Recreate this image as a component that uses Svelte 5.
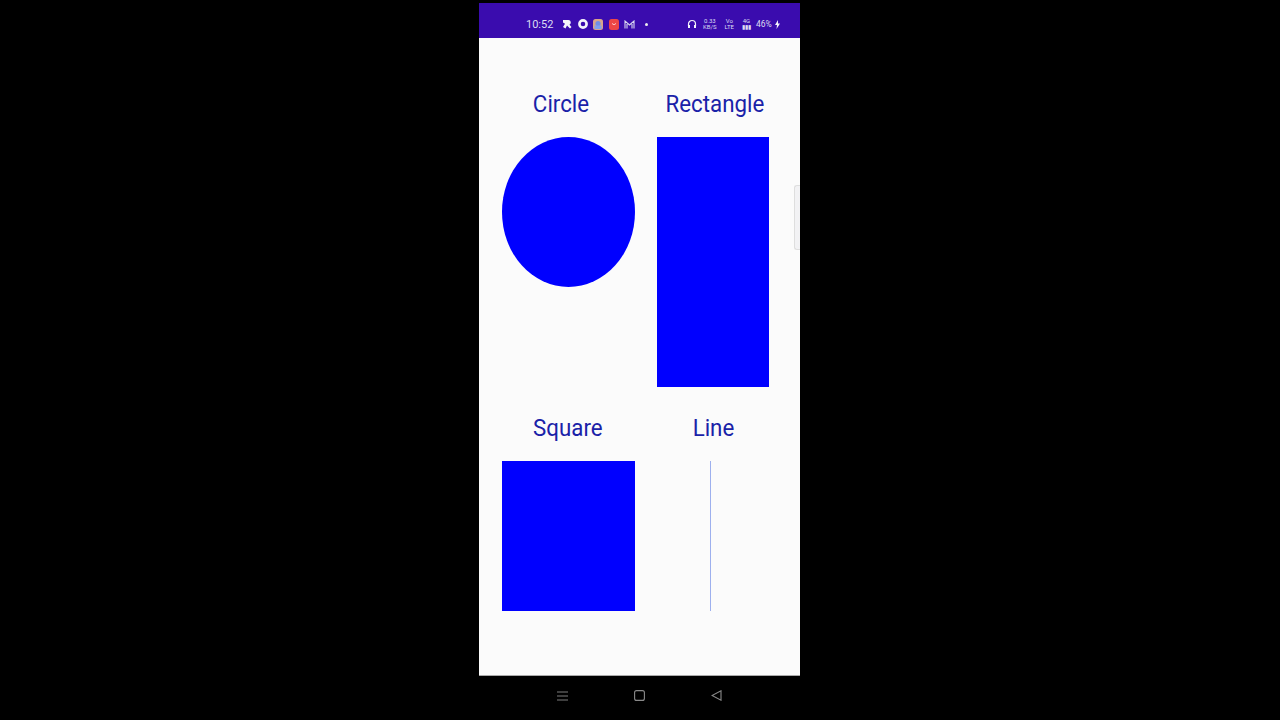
<script>
  const cells = [
    { name: 'Circle', kind: 'circle' },
    { name: 'Rectangle', kind: 'rect' },
    { name: 'Square', kind: 'square' },
    { name: 'Line', kind: 'line' }
  ];
</script>

<div class="page">
  <div class="phone">
    <header class="status">
      <span class="time">10:52</span>
      <div class="notif">
        <svg width="10" height="10" viewBox="0 0 10 10"><path d="M1 1h5.500a2.500 2.500 0 0 1 1 4.700L9.500 8 8 9.500 5 6.500 3.500 9.500 1 8l2-3.200L1 3.500z" fill="#f4f4fa"/></svg>
        <svg width="10" height="10" viewBox="0 0 10 10"><circle cx="5" cy="5" r="3.600" fill="none" stroke="#f4f4fa" stroke-width="2.600"/></svg>
        <svg width="10" height="11" viewBox="0 0 10 11"><rect width="10" height="11" rx="2.500" fill="#d8a48c"/><circle cx="5" cy="4.500" r="2.600" fill="#6f8ee8"/><rect x="1.500" y="6.500" width="7" height="3.500" fill="#7fa0f0"/></svg>
        <svg width="10" height="11" viewBox="0 0 10 11"><rect width="10" height="11" rx="2.500" fill="#ee4646"/><path d="M3 4.500q2 2.500 4 0" fill="none" stroke="#ffc8c8"/></svg>
        <svg width="11" height="9" viewBox="0 0 11 9"><path d="M1 8.500V1l4.500 4L10 1v7.500M3 8.500V4M8 8.500V4" fill="none" stroke="#d8d8f0" stroke-width="1.100"/></svg>
        <i class="dot"></i>
      </div>
      <div class="sys">
        <svg width="10" height="10" viewBox="0 0 10 10"><path d="M1.500 7V5a3.500 3.500 0 0 1 7 0v2" fill="none" stroke="#f4f4fa" stroke-width="1.200"/><rect x="1" y="6" width="2" height="3" fill="#f4f4fa"/><rect x="7" y="6" width="2" height="3" fill="#f4f4fa"/></svg>
        <span class="stack speed"><b>0.33</b><b>KB/S</b></span>
        <span class="stack volte"><b>Vo</b><b>LTE</b></span>
        <span class="stack signal"><b>4G</b><b>▮▮▮</b></span>
        <span class="batt">46%</span>
        <svg width="5" height="9" viewBox="0 0 5 9"><path d="M3 0 0 5h2L1.500 9 5 3.500H3z" fill="#f4f4fa"/></svg>
      </div>
    </header>

    <main class="screen">
      <div class="grid">
        {#each cells as c}
          <section class="cell">
            <h2 class="label {c.kind}-label">{c.name}</h2>
            <div class="shape {c.kind}"></div>
          </section>
        {/each}
      </div>
      <div class="scroll-handle"></div>
    </main>

    <nav class="navbar">
      <svg width="11" height="10" viewBox="0 0 11 10"><path d="M0 1h11M0 5h11M0 9h11" stroke="#7c7c7c" stroke-width="1.200"/></svg>
      <svg width="11" height="11" viewBox="0 0 11 11"><rect x=".6" y=".6" width="9.800" height="9.800" rx="2" fill="none" stroke="#8a8a8a" stroke-width="1.100"/></svg>
      <svg width="11" height="11" viewBox="0 0 11 11"><path d="M10 .8V10.200L1 5.500z" fill="none" stroke="#8a8a8a" stroke-width="1.100"/></svg>
    </nav>
  </div>
</div>

<style>
  :global(body) {
    margin: 0;
    background: #000;
  }
  .page {
    width: 1280px;
    height: 720px;
    background: #000;
    padding: 3px 0 0 479px;
    box-sizing: border-box;
    overflow: hidden;
    font-family: Roboto, "Liberation Sans", sans-serif;
  }
  .phone {
    width: 321px;
    height: 717px;
    display: flex;
    flex-direction: column;
  }
  .status {
    height: 35px;
    flex: none;
    background: #3a0cae;
    color: #dcdcf2;
    display: flex;
    align-items: center;
    padding: 7px 0 0 47px;
    box-sizing: border-box;
  }
  .time {
    font-size: 11px;
    width: 36px;
    white-space: nowrap;
  }
  .notif {
    display: flex;
    align-items: center;
    gap: 5.500px;
  }
  .dot {
    width: 3px;
    height: 3px;
    border-radius: 50%;
    background: #eee;
    margin-left: 4px;
  }
  .sys {
    display: flex;
    align-items: center;
    gap: 6px;
    margin-left: 39.500px;
  }
  .stack {
    display: flex;
    flex-direction: column;
    align-items: center;
    font-size: 6px;
    line-height: 6px;
  }
  .stack b {
    font-weight: 400;
  }
  .volte {
    margin-left: 2px;
  }
  .signal {
    margin-left: 2px;
  }
  .batt {
    font-size: 8.500px;
    margin-right: -3px;
    margin-left: -1px;
    white-space: nowrap;
  }
  .screen {
    position: relative;
    height: 637px;
    flex: none;
    background: #fbfbfb;
    border-bottom: 1px solid #aaa;
  }
  .grid {
    display: grid;
    grid-template-columns: 133px 112px;
    grid-template-rows: 324px 220px;
    column-gap: 22px;
    padding: 50px 0 0 22.500px;
  }
  .cell {
    display: flex;
    flex-direction: column;
    align-items: center;
  }
  .label {
    margin: 0;
    font-size: 23px;
    font-weight: 400;
    line-height: 34px;
    height: 49px;
    color: #1a22a8;
    white-space: nowrap;
    transform: scaleX(0.97);
  }
  .circle-label {
    margin-right: 14px;
  }
  .rect-label {
    margin-left: 5px;
  }
  .line-label {
    margin-left: 1px;
  }
  .shape {
    background: #0000ff;
    flex: none;
  }
  .circle {
    width: 133px;
    height: 150px;
    border-radius: 50%;
  }
  .rect {
    width: 112px;
    height: 250px;
  }
  .square {
    width: 133px;
    height: 150px;
  }
  .line {
    width: 1px;
    height: 150px;
    background: #9db0ee;
    margin-right: 5px;
  }
  .scroll-handle {
    position: absolute;
    right: 0;
    top: 147px;
    width: 6px;
    height: 65px;
    background: #f2f2f4;
    border: 1px solid #dedede;
    border-right: 0;
    border-radius: 3px 0 0 3px;
    box-sizing: border-box;
  }
  .navbar {
    flex: 1;
    display: flex;
    align-items: center;
    padding: 0 78px 5px;
    justify-content: space-between;
    background: #000;
  }
</style>
